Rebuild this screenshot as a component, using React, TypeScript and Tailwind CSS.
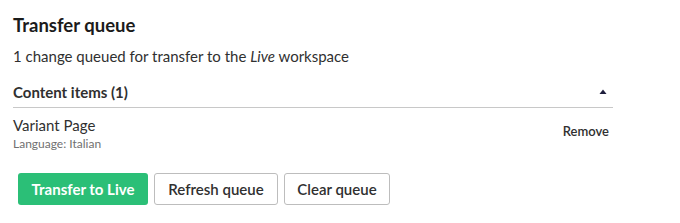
import React from "react";

export default function App() {
  return (
    <div className="w-[680px] h-[223px] bg-white text-[#1b1b1b] overflow-hidden" style={{ fontFamily: "Lato, 'Noto Sans', sans-serif" }}>
      <div className="pl-[13px] pr-[67px] pt-[12px]">
        <h1 className="text-[18.5px] font-bold leading-[26px] text-[#1b1b1b]">Transfer queue</h1>
        <p className="mt-[8px] text-[15px] leading-[20px] text-[#303030]">
          1 change queued for transfer to the <em>Live</em> workspace
        </p>
        <div className="mt-[13px] flex items-center justify-between border-b border-[#c8c8c8] pb-[2px] h-[29px]">
          <span className="text-[15px] font-bold text-[#303030] leading-[20px]">Content items (1)</span>
          <svg width="8" height="6" viewBox="0 0 8 6" className="mr-[6px]">
            <polygon points="4,0.5 7.5,5 0.5,5" fill="#1e1e3c" />
          </svg>
        </div>
        <div className="flex items-start justify-between pt-[7px]">
          <div className="flex flex-col">
            <span className="text-[15px] leading-[20px] text-[#303030]">Variant Page</span>
            <span className="text-[12px] leading-[16px] text-[#707070] mt-[1px]">Language: Italian</span>
          </div>
          <button className="mt-[8px] mr-[4px] text-[13px] font-semibold text-[#303030] leading-[16px]">Remove</button>
        </div>
        <div className="mt-[21px] ml-[5px] flex gap-[6px]">
          <button className="h-[32px] w-[130px] rounded-[3px] bg-[#2bbf77] text-white text-[15px] font-bold">Transfer to Live</button>
          <button className="h-[32px] w-[124px] rounded-[3px] border border-[#bdbdbd] bg-white text-[15px] text-[#303030] font-semibold">Refresh queue</button>
          <button className="h-[32px] w-[106px] rounded-[3px] border border-[#bdbdbd] bg-white text-[15px] text-[#303030] font-semibold">Clear queue</button>
        </div>
      </div>
    </div>
  );
}
